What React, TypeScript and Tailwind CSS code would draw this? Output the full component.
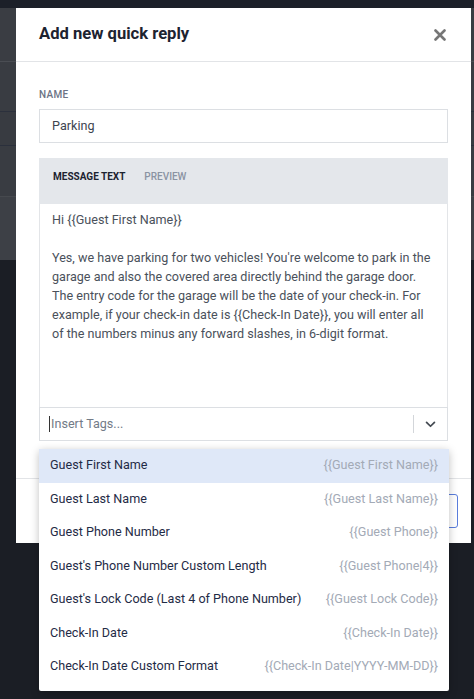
import React from "react";

const tags = [
  { label: "Guest First Name", tag: "{{Guest First Name}}" },
  { label: "Guest Last Name", tag: "{{Guest Last Name}}" },
  { label: "Guest Phone Number", tag: "{{Guest Phone}}" },
  { label: "Guest's Phone Number Custom Length", tag: "{{Guest Phone|4}}" },
  { label: "Guest's Lock Code (Last 4 of Phone Number)", tag: "{{Guest Lock Code}}" },
  { label: "Check-In Date", tag: "{{Check-In Date}}" },
  { label: "Check-In Date Custom Format", tag: "{{Check-In Date|YYYY-MM-DD}}" },
];

const message = `Hi {{Guest First Name}}

Yes, we have parking for two vehicles! You're welcome to park in the garage and also the covered area directly behind the garage door. The entry code for the garage will be the date of your check-in. For example, if your check-in date is {{Check-In Date}}, you will enter all of the numbers minus any forward slashes, in 6-digit format.`;

export default function App() {
  return (
    <div className="relative w-[474px] h-[699px] overflow-hidden bg-[#1b1e25] font-['Roboto','Liberation_Sans',sans-serif]">
      {/* Page behind the overlay */}
      <div className="h-[8px] bg-[#1c2029]" />
      <div className="flex flex-col bg-[#393c42]">
        <div className="h-[54px] border-b border-[#4a4d53] bg-[#3a3d43]" />
        <div className="h-[50px] border-b border-[#2b303c] bg-[#393c42]" />
        <div className="h-[34px] border-b border-[#2b303c] bg-[#383b41]" />
        <div className="h-[51px] border-b border-[#46494e] bg-[#393c42]" />
        <div className="h-[63px] bg-[#3d4046]" />
      </div>

      {/* Modal */}
      <div className="absolute left-[16px] top-[8px] w-[455px] h-[535px] bg-white flex flex-col">
        <div className="h-[54px] shrink-0 flex items-center justify-between pl-[23px] pr-[25px] border-b border-[#e2e4e7]">
          <h2 className="text-[16.6px] font-bold text-[#1d2330]">Add new quick reply</h2>
          <svg width="12" height="12" viewBox="0 0 12 12" className="text-[#767676]">
            <path d="M1.5 1.5l9 9M10.5 1.5l-9 9" stroke="currentColor" strokeWidth="2.6" strokeLinecap="round" />
          </svg>
        </div>

        <div className="flex-1 px-[23px] pt-[26px]">
          <div className="text-[10px] leading-[13px] font-medium tracking-[0.3px] text-[#6b7385]">NAME</div>
          <div className="mt-[8px] h-[34px] flex items-center border border-[#dcdfe3] px-[12px] text-[12.6px] text-[#3d4550]">
            Parking
          </div>

          <div className="mt-[15px]">
            <div className="h-[46px] bg-[#e4e7eb] flex items-start gap-[19px] pl-[14px] pt-[12px] text-[10px] leading-[13px]">
              <span className="font-bold text-[#1d2330]">MESSAGE TEXT</span>
              <span className="font-medium text-[#8a93a2]">PREVIEW</span>
            </div>
            <div className="h-[203px] border-x border-[#e3e5e8] px-[12px] pt-[6px] text-[12.6px] leading-[19px] text-[#4a515b] whitespace-pre-line">
              {message}
            </div>
            <div className="relative h-[34px] border border-[#dcdfe3] flex items-center">
              <div className="flex-1 flex items-center pl-[9px] text-[12.6px] text-[#737b87]">
                <span className="w-px h-[16px] bg-[#333] mr-[1px]" />
                <span>Insert Tags...</span>
              </div>
              <span className="w-px h-[18px] bg-[#d3d6da]" />
              <div className="w-[33px] flex items-center justify-center text-[#444a52]">
                <svg width="11" height="7" viewBox="0 0 12 8">
                  <path d="M1.5 1.5l4.5 4.5 4.5-4.5" fill="none" stroke="currentColor" strokeWidth="2" strokeLinecap="round" strokeLinejoin="round" />
                </svg>
              </div>

              {/* Tags menu */}
              <div className="absolute left-[-1px] right-[-2px] top-[calc(100%+9px)] z-10 bg-white rounded-[2px] shadow-[0_2px_8px_rgba(0,0,0,0.25)] pb-[7px]">
                {tags.map((t, i) => (
                  <div
                    key={t.label}
                    className={`h-[33.5px] flex items-center justify-between px-[11px] text-[12.6px] ${i === 0 ? "bg-[#dfe8f8]" : ""}`}
                  >
                    <span className="text-[#1f2b46]">{t.label}</span>
                    <span className="text-[#a3aab6]">{t.tag}</span>
                  </div>
                ))}
              </div>
            </div>
          </div>
        </div>

        {/* Footer: its buttons sit under the open menu */}
        <div className="h-[65px] shrink-0 border-t border-[#e2e4e7] flex items-center justify-end pr-[13px]">
          <button aria-label="Save" className="h-[34px] w-[90px] rounded-[3px] border border-[#5a7ddc]" />
        </div>
      </div>
    </div>
  );
}
